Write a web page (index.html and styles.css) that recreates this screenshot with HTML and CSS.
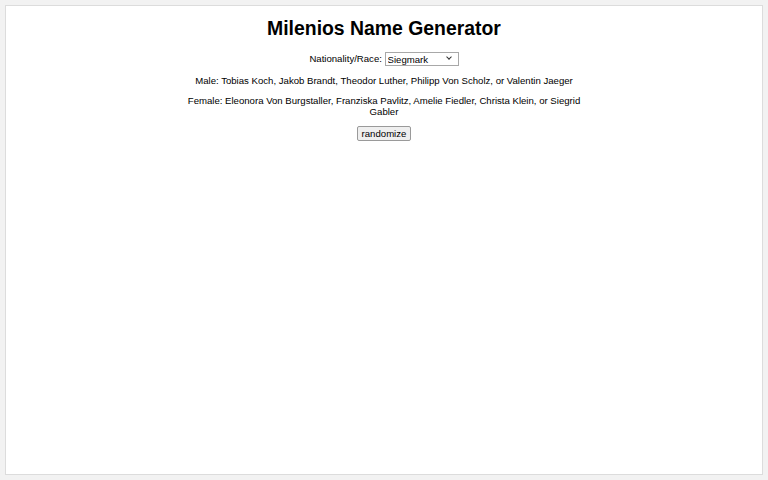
FILE: index.html
```html
<!DOCTYPE html>
<html lang="en">
<head>
    <meta charset="UTF-8">
    <title>Milenios Name Generator</title>
    <link rel="stylesheet" href="styles.css">
</head>
<body>
    <div class="page">
        <h1>Milenios Name Generator</h1>
        <div class="generator">
            <p>
                <label for="race">Nationality/Race:</label>
                <span class="select-wrap">
                    <select id="race">
                        <option>Siegmark</option>
                    </select>
                </span>
            </p>
            <p id="male">Male: Tobias Koch, Jakob Brandt, Theodor Luther, Philipp Von Scholz, or Valentin Jaeger</p>
            <p id="female">Female: Eleonora Von Burgstaller, Franziska Pavlitz, Amelie Fiedler, Christa Klein, or Siegrid Gabler</p>
            <p><button id="randomize">randomize</button></p>
        </div>
    </div>
</body>
</html>
```

FILE: styles.css
```css
body {
    margin: 0;
    padding: 5px;
    background-color: #f2f2f2;
    font-family: 'Liberation Sans', Arial, sans-serif;
    color: #000;
}

.page {
    background-color: #fff;
    border: 1px solid #dcdcdc;
    height: 470px;
    box-sizing: border-box;
    padding-top: 11px;
}

h1 {
    font-size: 19.4px;
    text-align: center;
    margin: 0 0 12px;
}

.generator {
    width: 400px;
    margin: 0 auto;
    text-align: center;
    font-size: 9.6px;
}

.generator p {
    margin: 0 0 9px;
}

.select-wrap {
    position: relative;
    display: inline-block;
    vertical-align: middle;
}

/* small chevron in place of the native arrow */
.select-wrap::after {
    content: "";
    position: absolute;
    right: 8px;
    top: 3px;
    width: 3px;
    height: 3px;
    border-right: 1px solid #333;
    border-bottom: 1px solid #333;
    transform: rotate(45deg);
    pointer-events: none;
}

select {
    appearance: none;
    -webkit-appearance: none;
    display: block;
    font-family: 'Liberation Sans', Arial, sans-serif;
    font-size: 9.6px;
    line-height: 11px;
    width: 74px;
    height: 14px;
    padding: 0 2px;
    border: 1px solid #a8a8a8;
    border-radius: 0;
    background-color: #fff;
    color: #000;
}

button {
    font-family: 'Liberation Sans', Arial, sans-serif;
    font-size: 9.6px;
    padding: 1px 4px;
    border: 1px solid #9a9a9a;
    border-radius: 2px;
    background-color: #efefef;
}
```
